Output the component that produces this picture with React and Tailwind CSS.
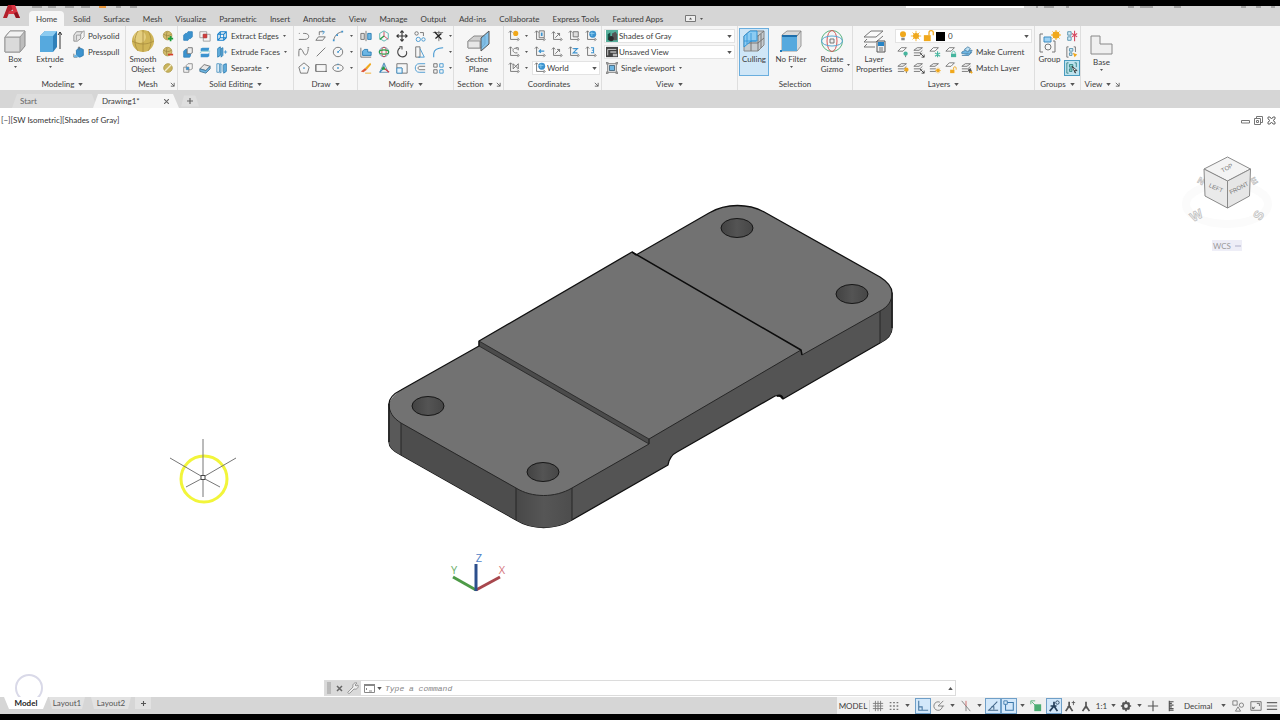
import { useState } from "react";

const MENU_TABS = [
    "Home", "Solid", "Surface", "Mesh", "Visualize", "Parametric", "Insert", "Annotate",
    "View", "Manage", "Output", "Add-ins", "Collaborate", "Express Tools", "Featured Apps",
];

const G = "#6a6a6a";
const B = "#3c93cf";
const LB = "#6cb6e4";
const O = "#f0a81c";

// Small ribbon icons, all on a 14 x 14 grid
const ICONS = {
    polysolid: (
        <>
            <path d="M1 6l3-4h7l-2 3v5l-4 3H1z" fill="#e4e4e4" stroke="#888" />
            <path d="M11 2l2-1v7l-3 3M4 6h5M4 6v6" fill="none" stroke="#999" />
        </>
    ),
    presspull: (
        <>
            <path d="M4 5l3-3 5 2v7l-4 2-4-2z" fill={B} stroke="#2a78b0" />
            <path d="M1 9v4h4M7 1v4M6 2l1-1 1 1" fill="none" stroke={G} />
            <path d="M1 11l3-1 3 3H1z" fill={LB} />
        </>
    ),
    meshAdd: (
        <>
            <circle cx="6.500" cy="6.500" r="5" fill="#d2bb6c" stroke="#b09a4c" />
            <path d="M2 5c3 2 6 2 9 0M6 2c-1 3-1 6 0 9" fill="none" stroke="#a08a44" />
            <path d="M10 7v6M7 10h6" stroke="#1c9c3b" strokeWidth="2" />
        </>
    ),
    meshLess: (
        <>
            <circle cx="6.500" cy="6.500" r="5" fill="#d2bb6c" stroke="#b09a4c" />
            <path d="M2 5c3 2 6 2 9 0M6 2c-1 3-1 6 0 9" fill="none" stroke="#a08a44" />
            <path d="M7 10h6" stroke="#d5402b" strokeWidth="2" />
        </>
    ),
    meshRefine: (
        <>
            <circle cx="7" cy="7" r="5" fill="#c9b45c" stroke="#b09a4c" />
            <path d="M3 11l8-8" stroke="#f3ecd0" strokeWidth="1.500" />
        </>
    ),
    union: <path d="M2 6l2-2h2l1-2h5v6l-2 2H8l-1 2H2z" fill={B} stroke="#3584bd" />,
    subtract: (
        <>
            <path d="M2 6l2-2h3v5h3v2l-1 2H2z" fill={B} stroke="#3584bd" />
            <path d="M6 3l1-1h5v6l-2 1H6z" fill="#eee" stroke={G} />
        </>
    ),
    intersect: (
        <>
            <path d="M2 6h6v6H2zM5 4l2-2h5v6l-2 1H5z" fill="#f4f4f4" stroke="#888" />
            <path d="M5 6h3v3H5z" fill={B} />
        </>
    ),
    interfere: (
        <>
            <path d="M1 2h8v7H1zM5 5h8v8H5z" fill="#f4f4f4" stroke="#999" />
            <path d="M5 5h4v4H5z" fill="#d63b3b" stroke="#b33" />
        </>
    ),
    slice: (
        <>
            <path d="M2 3l2-1h8l-1 4H2zM2 9h9l1-2v5l-2 1H2z" fill={B} />
            <path d="M1 8l3-2h9" stroke="#8cc" fill="none" />
        </>
    ),
    thicken: (
        <>
            <path d="M1 8l5-5 7 2-5 5z" fill="#e6e6e6" stroke={G} />
            <path d="M1 8v3l7 2 5-5V5l-5 5z" fill={LB} stroke="#4a7695" />
        </>
    ),
    extractEdges: (
        <path d="M2 5l3-3h7v7l-3 3H2zM2 5h7v7M9 5l3-3M5 2v7h7M5 9l-3 3" fill="none" stroke="#157fcb" strokeWidth="1.200" />
    ),
    extrudeFaces: (
        <>
            <path d="M2 3l3-2v10l-3 2zM6 3l2-1v9l-2 2z" fill={LB} stroke="#2479b0" />
            <path d="M9 7h4M11 5v4" stroke={B} />
        </>
    ),
    separate: (
        <>
            <path d="M1 2h3v10H1zM5 2l2 1v8l-2 2z" fill="#e8f4fb" stroke="#4c93c0" />
            <path d="M9 3l3-1v9l-3 2z" fill={LB} stroke="#2479b0" />
        </>
    ),
    polyline: <path d="M1 4h1M1 11h7c6 0 6-7 0-7H6" fill="none" stroke={G} />,
    sweep: (
        <>
            <path d="M4 8h8l-3 4H1zM5 6V2h5" fill="none" stroke={G} />
            <path d="M8 1l3 1-2 3" fill="none" stroke={B} />
        </>
    ),
    arc: (
        <>
            <path d="M2 12C3 6 7 3 12 2" fill="none" stroke={G} />
            <path d="M1 11h2v2H1zM11 1h2v2h-2zM5 5h2v2H5z" fill={B} />
        </>
    ),
    spline: <path d="M1 12V7c0-5 3-5 5 0s5 5 6-4M1 4h2M11 2h2" fill="none" stroke={G} />,
    line: <path d="M2 12L12 2" stroke={G} />,
    circle: (
        <>
            <circle cx="7" cy="7" r="5.500" fill="none" stroke={G} />
            <path d="M7 7l4-4" stroke={B} />
            <path d="M6 6h2v2H6z" fill={B} />
        </>
    ),
    polygon: (
        <>
            <path d="M7 1l6 5-2 7H3L1 6z" fill="none" stroke={G} />
            <circle cx="7" cy="7" r="1" fill={B} />
        </>
    ),
    rect: <path d="M1 3h12v8H1zM1 3v8M12 11h2" fill="none" stroke={G} />,
    ellipse: (
        <>
            <ellipse cx="7" cy="7" rx="6" ry="4" fill="none" stroke={G} />
            <path d="M6 6h2v2H6zM6 2h2v1H6z" fill={B} />
        </>
    ),
    mirror: (
        <>
            <path d="M1 4h4v7H1z" fill="#ddd" stroke={G} />
            <path d="M9 4h4v7H9z" fill={LB} stroke="#2479b0" />
            <path d="M7 1v12" stroke={G} />
        </>
    ),
    align: (
        <>
            <path d="M1 2v11h12" fill="none" stroke={G} />
            <path d="M3 6l2-2h4v3h4v4H3z" fill={LB} stroke="#2479b0" />
        </>
    ),
    erase: (
        <>
            <path d="M12 1L6 7l2 2 5-6z" fill={O} />
            <path d="M6 7l2 2-4 3-3-1z" fill="#df5a3a" />
            <path d="M6 13h7" stroke={O} />
        </>
    ),
    move3d: (
        <>
            <path d="M7 1l5 3v6l-5 3-5-3V4z" fill="none" stroke="#4aaea8" />
            <path d="M7 7V2M7 7l5 4" stroke="#c8374b" />
            <path d="M7 7l-5 4" stroke="#279c46" strokeWidth="1.500" />
        </>
    ),
    rotate3d: (
        <>
            <circle cx="7" cy="7" r="5.500" fill="none" stroke="#5a8aa8" />
            <ellipse cx="7" cy="7" rx="2.500" ry="5.500" fill="none" stroke="#cf3b45" />
            <ellipse cx="7" cy="7" rx="5.500" ry="2.500" fill="none" stroke="#29a04a" strokeWidth="1.300" />
        </>
    ),
    scale3d: (
        <>
            <path d="M7 1L2 12h10z" fill="none" stroke="#5a8aa8" />
            <path d="M7 2v5l-5 5" fill="none" stroke="#2b86c5" strokeWidth="1.200" />
            <path d="M5 6l2-1 2 4H4z" fill="#279c46" />
            <path d="M8 8l5 4" stroke="#cf3b45" strokeWidth="1.500" />
        </>
    ),
    move: <path d="M7 1v12M1 7h12M5 3l2-2 2 2M5 11l2 2 2-2M3 5L1 7l2 2M11 5l2 2-2 2" fill="none" stroke="#333" strokeWidth="1.300" />,
    rotate: <path d="M5 2C1 4 1 10 5 12s9-1 7-6M4 1h3v3" fill="none" stroke="#444" strokeWidth="1.200" />,
    scale: (
        <>
            <path d="M1 2h12v11H1zM1 7h6v6" fill="none" stroke={G} />
            <path d="M1 7h6v6H1z" fill="#e7f3fa" stroke={B} />
        </>
    ),
    copy: (
        <>
            <circle cx="3" cy="4" r="2" fill="none" stroke={G} />
            <path d="M7 3h4v4" fill="none" stroke={G} />
            <circle cx="5" cy="11" r="2.500" fill="none" stroke={B} />
            <circle cx="11" cy="11" r="2" fill="none" stroke={B} />
        </>
    ),
    stretch: (
        <>
            <path d="M2 1h5v12H2z" fill="none" stroke={G} />
            <path d="M7 3l5 10H5" fill="none" stroke={B} />
        </>
    ),
    offset: (
        <>
            <path d="M13 2H6c-6 0-6 10 0 10h7" fill="none" stroke={B} />
            <path d="M13 5H7c-3 0-3 4 0 4h6" fill="none" stroke={G} />
        </>
    ),
    trim: (
        <>
            <path d="M1 3h12M8 1v12" stroke={G} />
            <path d="M3 2l8 9M11 4l-7 6" stroke="#222" strokeWidth="1.500" />
        </>
    ),
    fillet: <path d="M2 13V9C2 5 6 2 13 2" fill="none" stroke={B} strokeWidth="1.200" />,
    array: (
        <>
            <path d="M2 2h4v4H2zM2 9h4v4H2z" fill="none" stroke={G} />
            <path d="M9 2h4v4H9zM9 9h4v4H9z" fill="none" stroke={B} />
        </>
    ),
    ucsOrigin: (
        <>
            <path d="M3 1v10h9M1 3l2-2 2 2M11 9l2 2-2 2" fill="none" stroke={G} />
            <circle cx="9" cy="4" r="3" fill={O} />
        </>
    ),
    ucsCircle: (
        <>
            <path d="M3 1v10h9M1 3l2-2 2 2M11 9l2 2-2 2" fill="none" stroke={G} />
            <path d="M11 4c-3-3-6 0-5 2s4 3 5 1M9 2h3v3" fill="none" stroke={G} />
        </>
    ),
    ucsBox: (
        <>
            <path d="M3 1v10h9M1 3l2-2 2 2M11 9l2 2-2 2" fill="none" stroke={G} />
            <path d="M6 1h6v8H6z" fill="#eee" stroke={G} />
            <path d="M8 3h2v4H8z" fill={B} />
        </>
    ),
    ucsArrow: (
        <>
            <path d="M3 1v10h9M1 3l2-2 2 2M11 9l2 2-2 2" fill="none" stroke={G} />
            <path d="M12 6H7M8 4L6 6l2 2" fill="none" stroke={B} strokeWidth="1.500" />
        </>
    ),
    ucsDiag: <path d="M3 2v9h9M1 4l2-2 2 2M11 9l2 2-2 2M5 9l5-5M7 4h3v3" fill="none" stroke={G} />,
    ucsGlobe: (
        <>
            <path d="M3 1v10h9M1 3l2-2 2 2M11 9l2 2-2 2" fill="none" stroke={G} />
            <circle cx="9" cy="5" r="4" fill={B} />
            <path d="M6 4h5M8 2v5" stroke="#8fd0f0" />
        </>
    ),
    ucsView: (
        <>
            <path d="M3 1v10h9M1 3l2-2 2 2M11 9l2 2-2 2" fill="none" stroke={G} />
            <path d="M6 2h6v6H6z" fill="#ddd" stroke={G} />
        </>
    ),
    ucsZ: (
        <>
            <path d="M3 1v10h9M1 3l2-2 2 2M11 9l2 2-2 2" fill="none" stroke={G} />
            <path d="M6 3h5L6 8h5" fill="none" stroke={B} strokeWidth="1.300" />
        </>
    ),
    ucsThree: (
        <>
            <path d="M3 1v10h9M1 3l2-2 2 2M11 9l2 2-2 2" fill="none" stroke={G} />
            <path d="M7 2h3v3H8h2v3H7" fill="none" stroke={B} strokeWidth="1.200" />
        </>
    ),
    ucsCross: (
        <>
            <path d="M3 1v10h9M1 3l2-2 2 2M11 9l2 2-2 2" fill="none" stroke={G} />
            <path d="M6 2l6 6M12 2L6 8M6 2v6M12 2v6" stroke={G} />
        </>
    ),
    shade: (
        <>
            <path d="M0 0h14v14H0z" fill="#56b09c" />
            <path d="M2 5l3-2v9H2z" fill="#164f44" />
            <path d="M7 4l4-2 2 3v7H7z" fill="#555" />
            <circle cx="6" cy="10" r="3" fill="#2b2b2b" />
        </>
    ),
    camera: (
        <>
            <path d="M0 1h14v12H0z" fill="#444" />
            <path d="M2 4h10M2 4v7" stroke="#ddd" />
            <path d="M5 6h7v2H5zM8 9h5v3H8z" fill="#bbb" />
        </>
    ),
    viewport: (
        <>
            <path d="M2 2h10v10H2zM0 1h3M11 1h3M0 13h3M11 13h3M1 0v3M13 0v3M1 11v3M13 11v3" fill="none" stroke={G} />
            <path d="M4 4h6v6H4z" fill={LB} stroke="#3a5a70" />
        </>
    ),
    bulb: (
        <>
            <circle cx="7" cy="5" r="3.500" fill={O} />
            <path d="M5 9h4v3H5z" fill="#8a8a8a" />
        </>
    ),
    sun: (
        <>
            <circle cx="7" cy="7" r="3.500" fill={O} />
            <path d="M7 1v12M1 7h12M3 3l8 8M11 3l-8 8" stroke={O} />
        </>
    ),
    lockOpen: (
        <>
            <path d="M1 6h8v7H1z" fill={O} />
            <path d="M7 6V3c0-3 5-3 5 0v3" fill="none" stroke={O} strokeWidth="1.500" />
        </>
    ),
    layerOff: (
        <>
            <path d="M1 6l4-4h6L7 6z" fill="#fff" stroke={G} />
            <circle cx="10" cy="9" r="2.500" fill="#45b59e" />
            <path d="M10 11v2" stroke={G} />
        </>
    ),
    layerIso: (
        <>
            <path d="M1 5l4-3h6L7 5zM1 8h7l3-3M1 11h7l3-3" fill="none" stroke={G} />
            <path d="M8 8l5 5M10 13h3v-3" stroke="#333" fill="none" />
        </>
    ),
    layerFreeze: (
        <>
            <path d="M1 6l4-4h6L7 6z" fill="#fff" stroke={G} />
            <path d="M10 6v7M7 8l6 4M13 8l-6 4" stroke="#45b59e" strokeWidth="1.300" />
        </>
    ),
    layerLock: (
        <>
            <path d="M1 6l4-4h6L7 6z" fill="#fff" stroke={G} />
            <path d="M7 9h6v4H7z" fill="#45b59e" />
            <path d="M8 9c0-4 4-4 4 0" fill="none" stroke="#45b59e" />
        </>
    ),
    layerCurrent: (
        <>
            <path d="M1 7l4-2h8l-3 4H1zM1 11h8l4-4" fill={LB} stroke="#4c83a8" />
            <path d="M4 4l4-3 3 2-3 4z" fill="#bcdff2" stroke="#4c83a8" />
        </>
    ),
    layerOn: (
        <>
            <path d="M1 5l4-3h6L7 5zM1 8h7l3-3M1 11h7l3-3" fill="none" stroke={G} />
            <circle cx="11" cy="9" r="2.500" fill={O} />
            <path d="M11 11v2" stroke={G} />
        </>
    ),
    layerThaw: (
        <>
            <path d="M1 5l4-3h6L7 5zM1 8h7M1 11h7" fill="none" stroke={G} />
            <circle cx="10.500" cy="10" r="2" fill={O} />
            <path d="M10.500 6.500v7M7 10h7M8 7.500l5 5M13 7.500l-5 5" stroke={O} strokeWidth=".7" />
        </>
    ),
    layerUnlock: (
        <>
            <path d="M1 5l4-4h6L7 5z" fill="#fff" stroke={G} />
            <path d="M6 9h5v4H6z" fill={O} />
            <path d="M10 9V7c0-2 3-2 3 0v2" fill="none" stroke={O} />
        </>
    ),
    layerMatch: (
        <>
            <path d="M1 5l4-3h6L7 5zM1 8h7l3-3M1 11h7l3-3" fill="none" stroke={G} />
            <path d="M8 9l3-2 2 4-3 2z" fill="#555" />
            <path d="M11 11l2 2" stroke={O} strokeWidth="2" />
        </>
    ),
    ungroup: (
        <>
            <path d="M2 2h4v4H2zM2 8h4v4H2z" fill="#d7edf7" stroke="#4b8ba8" />
            <path d="M10 1v12M7 4l6 4M13 4l-6 4" stroke="#d64b62" strokeWidth="1.300" />
        </>
    ),
    groupEdit: (
        <>
            <path d="M3 1H1v12h2M9 1h2v6" fill="none" stroke={G} />
            <path d="M4 3h4v3H4zM4 8h3v3H4z" fill="#d7edf7" stroke="#4b8ba8" />
            <path d="M8 8l5 2-3 3z" fill={O} />
        </>
    ),
    groupSelect: (
        <>
            <path d="M3 1H1v12h2M10 1h2v5" fill="none" stroke="#2c7f80" />
            <path d="M4 3h4v3H4zM4 8h3v3H4z" fill="#8ed0c8" stroke="#2c7f80" />
            <path d="M7 5l6 5-3 0 1 3z" fill="#fff" stroke="#333" />
        </>
    ),
};

function Icon({ name }) {
    return (
        <svg viewBox="0 0 14 14" className="size-3 shrink-0" aria-hidden="true">
            {ICONS[name]}
        </svg>
    );
}

function Caret({ small }) {
    return (
        <svg viewBox="0 0 6 4" className={small ? "h-0.5 w-[3px] shrink-0" : "h-[3px] w-[5px] shrink-0"} aria-hidden="true">
            <path d="M0 0h6L3 4z" fill="#555" />
        </svg>
    );
}

function Tool({ icon, active }) {
    return (
        <button
            type="button"
            aria-label={icon}
            className={`flex h-4 w-4 shrink-0 items-center justify-center ${active ? "border border-[#4a9cc0] bg-[#bfe3ee]" : ""}`}
        >
            <Icon name={icon} />
        </button>
    );
}

function Drop() {
    return (
        <button type="button" aria-label="More options" className="flex h-4 w-2 shrink-0 items-center justify-center">
            <Caret small />
        </button>
    );
}

function TextTool({ icon, children, drop }) {
    return (
        <button type="button" className="flex h-4 items-center whitespace-nowrap">
            <span className="flex w-4 justify-center">
                <Icon name={icon} />
            </span>
            <span className="pl-px">{children}</span>
            {drop && (
                <span className="pl-1">
                    <Caret small />
                </span>
            )}
        </button>
    );
}

function BigTool({ art, lines, drop, active, className = "" }) {
    return (
        <button
            type="button"
            className={`flex h-12 shrink-0 flex-col items-center leading-[10px] ${active ? "border border-[#6aaede] bg-[#cfe6f7]" : "border border-transparent"} ${className}`}
        >
            <svg viewBox="0 0 24 24" className="mb-px size-6 shrink-0" aria-hidden="true">
                {art}
            </svg>
            {lines.map((line) => (
                <span key={line} className="whitespace-nowrap">{line}</span>
            ))}
            {drop && (
                <span className="flex h-1.5 items-center">
                    <Caret small />
                </span>
            )}
        </button>
    );
}

function Panel({ title, drop, launcher, className, children }) {
    return (
        <section className={`flex shrink-0 flex-col border-r border-[#dedede] pt-0.5 ${className}`}>
            <div className="flex h-12">{children}</div>
            <div className="flex h-[14px] items-center justify-center pt-0.5">
                <span className="flex flex-1 items-center justify-center gap-1">
                    {title}
                    {drop && <Caret />}
                </span>
                {launcher && (
                    <button type="button" aria-label={`${title} settings`} className="pr-0.5">
                        <svg viewBox="0 0 6 6" className="size-[5px]">
                            <path d="M1 1l4 4M5 1v4H1" fill="none" stroke="#555" />
                        </svg>
                    </button>
                )}
            </div>
        </section>
    );
}

function Combo({ icon, label, value, className = "" }) {
    return (
        <label className={`relative flex h-[14px] items-center border border-[#e3e3e3] bg-white ${className}`}>
            <span className="pl-px">
                <Icon name={icon} />
            </span>
            <select aria-label={label} className="h-full min-w-0 flex-1 appearance-none bg-transparent pl-px outline-none">
                <option>{value}</option>
            </select>
            <span className="pointer-events-none pr-0.5">
                <Caret />
            </span>
        </label>
    );
}

const BIG_ART = {
    box: (
        <>
            <path d="M2 8l5-6h15v15l-5 6H2z" fill="#bdbdbd" stroke="#888" />
            <path d="M2 8h15v15H2z" fill="#dadada" stroke="#999" />
            <path d="M17 8l5-6H7L2 8z" fill="#f1f1f1" stroke="#999" />
        </>
    ),
    extrude: (
        <>
            <path d="M2 7l5-5h12v16l-4 5H2z" fill="#2f80b9" />
            <path d="M2 7h13v16H2z" fill="#56a9de" />
            <path d="M2 7l5-5h12l-4 5z" fill="#8ccbf0" />
            <path d="M22 20V3M20 6l2-3 2 3" fill="none" stroke="#333" />
        </>
    ),
    sphere: (
        <>
            <circle cx="12" cy="12" r="11" fill="#d0b557" />
            <circle cx="9" cy="8" r="6" fill="#ecd98f" opacity=".7" />
            <path d="M1 12c7 4 15 4 22 0M12 1v22M7 2c-4 6-4 14 0 20M17 2c4 6 4 14 0 20" fill="none" stroke="#a88e40" strokeWidth=".8" />
        </>
    ),
    section: (
        <>
            <path d="M1 12l6-5h11v8l-4 4H1z" fill="#cfcfcf" stroke="#888" />
            <path d="M1 12h12v7H1z" fill="#e7e7e7" stroke="#999" />
            <path d="M14 9l8-7v13l-8 7z" fill="#69b6e8" fillOpacity=".8" stroke="#555" />
        </>
    ),
    culling: (
        <>
            <path d="M2 7l6-5h14v14l-6 6H2z" fill="#c6ccd0" stroke="#888" />
            <path d="M2 7h14v15M16 7l6-5M2 14h14l6-5M9 7v15M9 7l6-5M19 5v14" fill="none" stroke="#777" />
            <path d="M2 7l6-5h7v10H9l-7 6z" fill="#8ccbf2" stroke="#2f93d6" />
            <path d="M2 12h12M5 5v10M9 4v9" stroke="#2f93d6" strokeWidth=".8" />
        </>
    ),
    filter: (
        <>
            <path d="M3 6l5-4h14v15l-4 5H3z" fill="#dadada" stroke="#999" />
            <path d="M3 8h15v14H3z" fill="#56a9de" />
            <path d="M3 6h15v2H3z" fill="#1f6fab" />
            <path d="M18 7l4-5" stroke="#888" />
            <path d="M1 21h2v2H1z" fill="#2277b5" />
        </>
    ),
    gizmo: (
        <>
            <circle cx="12" cy="12" r="10.500" fill="none" stroke="#5cb582" />
            <ellipse cx="12" cy="12" rx="5" ry="10.500" fill="none" stroke="#d45858" />
            <ellipse cx="12" cy="12" rx="10.500" ry="5" fill="none" stroke="#5aa7d2" />
            <path d="M10 10h4v4h-4z" fill="#eee" stroke="#777" />
        </>
    ),
    layers: (
        <>
            <path d="M2 8l7-6h12l-7 6zM2 13h12l7-6M2 13l3-3M2 18h11M2 18l3-3" fill="#fafafa" stroke="#777" />
            <path d="M15 12h8v11h-8z" fill="#eee" stroke="#555" />
            <path d="M16 13h6v4h-6z" fill="#2684c6" />
            <path d="M17 19h4M17 21h4" stroke="#777" />
        </>
    ),
    group: (
        <>
            <path d="M5 5H2v18h3M15 12h2v11h-3" fill="none" stroke="#777" />
            <path d="M6 8h7v5H6z" fill="#9ed2f4" stroke="#3c8bc0" />
            <circle cx="10" cy="18" r="3" fill="none" stroke="#777" />
            <circle cx="18" cy="6" r="3.500" fill={O} />
            <path d="M18 1v10M13 6h10M14.500 2.500l7 7M21.500 2.500l-7 7" stroke={O} />
        </>
    ),
    base: <path d="M1 4h9v8h12v10H1z" fill="#efefef" stroke="#888" />,
};

function Ribbon() {
    return (
        <div className="flex h-16 shrink-0 overflow-hidden bg-[#f6f6f6]">
            <Panel title="Modeling" drop className="w-[126px]">
                <BigTool art={BIG_ART.box} lines={["Box"]} drop className="w-[30px]" />
                <BigTool art={BIG_ART.extrude} lines={["Extrude"]} drop className="w-10" />
                <div className="pl-px">
                    <TextTool icon="polysolid">Polysolid</TextTool>
                    <TextTool icon="presspull">Presspull</TextTool>
                </div>
            </Panel>
            <Panel title="Mesh" launcher className="w-[52px]">
                <BigTool art={BIG_ART.sphere} lines={["Smooth", "Object"]} className="w-[34px]" />
                <div>
                    <Tool icon="meshAdd" />
                    <Tool icon="meshLess" />
                    <Tool icon="meshRefine" />
                </div>
            </Panel>
            <Panel title="Solid Editing" drop className="w-[116px]">
                <div className="grid w-9 shrink-0 grid-cols-2 pl-0.5">
                    <Tool icon="union" />
                    <Tool icon="interfere" />
                    <Tool icon="subtract" />
                    <Tool icon="slice" />
                    <Tool icon="intersect" />
                    <Tool icon="thicken" />
                </div>
                <div>
                    <TextTool icon="extractEdges" drop>Extract Edges</TextTool>
                    <TextTool icon="extrudeFaces" drop>Extrude Faces</TextTool>
                    <TextTool icon="separate" drop>Separate</TextTool>
                </div>
            </Panel>
            <Panel title="Draw" drop className="w-16">
                <div className="pl-0.5">
                    {[["polyline", "sweep", "arc"], ["spline", "line", "circle"], ["polygon", "rect", "ellipse"]].map(([a, b, c]) => (
                        <div key={a} className="flex gap-px">
                            <Tool icon={a} />
                            <Tool icon={b} />
                            <Tool icon={c} />
                            <Drop />
                        </div>
                    ))}
                </div>
            </Panel>
            <Panel title="Modify" drop className="w-24">
                <div>
                    {[
                        ["mirror", "move3d", "move", "copy", "trim"],
                        ["align", "rotate3d", "rotate", "stretch", "fillet"],
                        ["erase", "scale3d", "scale", "offset", "array"],
                    ].map((row) => (
                        <div key={row[0]} className="flex">
                            <div className="flex gap-0.5">
                                {row.map((name) => (
                                    <Tool key={name} icon={name} />
                                ))}
                            </div>
                            <Drop />
                        </div>
                    ))}
                </div>
            </Panel>
            <Panel title="Section" drop launcher className="w-[50px]">
                <BigTool art={BIG_ART.section} lines={["Section", "Plane"]} className="w-full" />
            </Panel>
            <Panel title="Coordinates" launcher className="w-[98px]">
                <div className="pl-0.5">
                    <div className="flex">
                        <Tool icon="ucsOrigin" />
                        <Drop />
                        <div className="flex gap-px pl-0.5">
                            <Tool icon="ucsBox" />
                            <Tool icon="ucsDiag" />
                            <Tool icon="ucsView" />
                            <Tool icon="ucsGlobe" />
                        </div>
                    </div>
                    <div className="flex">
                        <Tool icon="ucsCircle" />
                        <Drop />
                        <div className="flex gap-px pl-0.5">
                            <Tool icon="ucsArrow" />
                            <Tool icon="ucsDiag" />
                            <Tool icon="ucsZ" />
                            <Tool icon="ucsThree" />
                        </div>
                    </div>
                    <div className="flex items-center">
                        <Tool icon="ucsCross" />
                        <Drop />
                        <Combo icon="ucsGlobe" label="Coordinate system" value="World" className="ml-0.5 w-[68px]" />
                    </div>
                </div>
            </Panel>
            <Panel title="View" drop className="w-[136px]">
                <div className="flex-1 px-0.5">
                    <div className="flex h-4 items-center">
                        <Combo icon="shade" label="Visual style" value="Shades of Gray" className="w-full" />
                    </div>
                    <div className="flex h-4 items-center">
                        <Combo icon="camera" label="Saved view" value="Unsaved View" className="w-full" />
                    </div>
                    <TextTool icon="viewport" drop>Single viewport</TextTool>
                </div>
            </Panel>
            <Panel title="Selection" className="w-[115px]">
                <BigTool art={BIG_ART.culling} lines={["Culling"]} active className="ml-px w-[30px]" />
                <BigTool art={BIG_ART.filter} lines={["No Filter"]} drop className="w-11" />
                <div className="flex items-end">
                    <BigTool art={BIG_ART.gizmo} lines={["Rotate", "Gizmo"]} className="w-[38px]" />
                    <span className="-ml-1 pb-2.5">
                        <Caret small />
                    </span>
                </div>
            </Panel>
            <Panel title="Layers" drop className="w-[182px]">
                <BigTool art={BIG_ART.layers} lines={["Layer", "Properties"]} className="w-[42px]" />
                <div className="flex-1 pr-0.5">
                    <div className="flex h-4 items-center">
                        <div className="flex h-[14px] w-full items-center gap-px border border-[#e3e3e3] bg-white pr-0.5 pl-px">
                            <Icon name="bulb" />
                            <Icon name="sun" />
                            <Icon name="lockOpen" />
                            <span className="size-[9px] bg-black" />
                            <select aria-label="Layer" className="h-full min-w-0 flex-1 appearance-none bg-transparent pl-0.5 outline-none">
                                <option>0</option>
                            </select>
                            <Caret />
                        </div>
                    </div>
                    <div className="flex">
                        <Tool icon="layerOff" />
                        <Tool icon="layerIso" />
                        <Tool icon="layerFreeze" />
                        <Tool icon="layerLock" />
                        <TextTool icon="layerCurrent">Make Current</TextTool>
                    </div>
                    <div className="flex">
                        <Tool icon="layerOn" />
                        <Tool icon="layerIso" />
                        <Tool icon="layerThaw" />
                        <Tool icon="layerUnlock" />
                        <TextTool icon="layerMatch">Match Layer</TextTool>
                    </div>
                </div>
            </Panel>
            <Panel title="Groups" drop className="w-[46px]">
                <BigTool art={BIG_ART.group} lines={["Group"]} className="w-[29px]" />
                <div>
                    <Tool icon="ungroup" />
                    <Tool icon="groupEdit" />
                    <Tool icon="groupSelect" active />
                </div>
            </Panel>
            <Panel title="View" drop launcher className="w-[42px] border-r-transparent">
                <BigTool art={BIG_ART.base} lines={["Base"]} drop className="w-full pt-[3px]" />
            </Panel>
        </div>
    );
}

function Header({ tab, setTab }) {
    return (
        <header className="relative flex h-5 shrink-0 flex-col justify-end bg-[#d6d6d6]">
            {/* Lower edge of the title bar */}
            <div className="absolute inset-x-0 top-0 flex h-0.5 justify-between pr-1 pl-8">
                <svg viewBox="0 0 110 2" className="h-0.5 w-[110px]" aria-hidden="true">
                    <path d="M0 1h10M16 1h8M33 1h9M49 1h9M84 1h5M98 1h7" stroke="#777" />
                    <path d="M67 1h7" stroke="#e8953a" strokeWidth="2" />
                </svg>
                <div className="ml-auto h-0.5 w-[118px] bg-white" />
                <svg viewBox="0 0 252 2" className="h-0.5 w-[252px]" aria-hidden="true">
                    <path d="M12 1h2M20 1h10M42 1h3M104 1h6M116 1h13M150 1h7M217 1h5M232 1h5M247 1h4" stroke="#777" />
                </svg>
            </div>
            <svg viewBox="0 0 18 14" className="absolute -top-px left-[3px] h-[14px] w-[18px]" aria-hidden="true">
                <path d="M5 0h5l1 3-5 5-2 5H0z" fill="#b3202c" />
                <path d="M8 0h4l5 13h-4l-2-4H5l1-3h4z" fill="#d93240" />
                <path d="M13 13l-2-5 3-1 3 6z" fill="#8e1520" />
            </svg>
            <nav className="flex h-[15px] items-stretch pl-[29px]">
                {MENU_TABS.map((name) => (
                    <a
                        key={name}
                        href="#ribbon"
                        onClick={() => setTab(name)}
                        className={`flex items-center pl-[7px] whitespace-nowrap first:mr-0.5 first:pr-[7px] ${tab === name ? "rounded-t-sm bg-[#f6f6f6] pr-1.5" : "pr-1.5"}`}
                    >
                        {name}
                    </a>
                ))}
                <button type="button" aria-label="Ribbon display" className="flex items-center gap-1 pl-4">
                    <svg viewBox="0 0 11 7" className="h-[7px] w-[11px]">
                        <path d="M.5.500h10v6H.5z" fill="#eee" stroke="#777" />
                        <path d="M4 4.500h3L5.500 2.500z" fill="#555" />
                    </svg>
                    <Caret small />
                </button>
            </nav>
        </header>
    );
}

function FileTabs() {
    return (
        <div className="flex h-[18px] shrink-0 items-end bg-[#d6d6d6] pl-3">
            <a href="#start" className="flex h-[14px] w-[85px] items-center bg-[#dedede] pl-2 text-[#666] [clip-path:polygon(5px_0,calc(100%-5px)_0,100%_100%,0_100%)]">
                Start
            </a>
            <div className="-ml-1 flex h-[14px] w-[86px] items-center justify-between bg-[#f6f6f6] pr-2.5 pl-[9px] [clip-path:polygon(5px_0,calc(100%-6px)_0,100%_100%,0_100%)]">
                <a href="#drawing1">Drawing1*</a>
                <button type="button" aria-label="Close Drawing1">
                    <svg viewBox="0 0 6 6" className="size-[5px]">
                        <path d="M0 0l6 6M6 0L0 6" stroke="#666" strokeWidth="1.300" />
                    </svg>
                </button>
            </div>
            <button type="button" aria-label="New drawing" className="ml-0.5 flex h-[14px] w-[18px] items-center justify-center bg-[#dedede] [clip-path:polygon(3px_10%,80%_10%,100%_90%,0_90%)]">
                <svg viewBox="0 0 6 6" className="size-1.5">
                    <path d="M3 0v6M0 3h6" stroke="#666" strokeWidth="1.200" />
                </svg>
            </button>
        </div>
    );
}

// Mounting plate in SW isometric view, with the UCS icon and the crosshair
function ModelView() {
    return (
        <svg viewBox="0 108 1280 589" className="h-full w-full" aria-hidden="true">
            <defs>
                <linearGradient id="corner" x1="0" x2="1" y1="0" y2="0">
                    <stop offset="0" stopColor="#484848" />
                    <stop offset=".5" stopColor="#565656" />
                    <stop offset="1" stopColor="#4d4d4d" />
                </linearGradient>
                <linearGradient id="hole" x1="0" x2="1" y1="0" y2="0">
                    <stop offset="0" stopColor="#424242" />
                    <stop offset=".5" stopColor="#545454" />
                    <stop offset="1" stopColor="#464646" />
                </linearGradient>
            </defs>
            <g strokeLinejoin="round">
                {/* body silhouette */}
                <path
                    d="M389 404V442C389 447 393 451 401 455L516 520C532 530 555 530 572 520L668 465C669 459 671 455 677 452L775 396C778 395 781 396 783 399L880 343C888 339 892 334 892 328V293L880 298 800 344 649 434 543 484 410 414z"
                    fill="#545454"
                    stroke="#111"
                    strokeWidth="1.300"
                />
                <path d="M401 423l115 65v32l-115-65z" fill="#4d4d4d" />
                <path d="M389 404v38c0 5 4 9 12 13v-32c-8-5-12-11-12-19z" fill="#595959" />
                <path d="M516 488c16 10 39 10 56 0v32c-17 10-40 10-56 0z" fill="url(#corner)" />
                <path d="M880 311c8-4 12-10 12-18v35c0 6-4 11-12 15z" fill="#4b4b4b" />
                {/* top faces */}
                <path
                    d="M401 390L479 346V341L632 252 636 255 709 213C726 203 749 203 766 213L880 277C896 287 896 301 880 311L802 355 801 350 649 439V444L572 488C555 498 532 498 516 488L401 423C385 413 385 400 401 390z"
                    fill="#727272"
                />
                <path d="M479 341l170 98v5l-170-98z" fill="#4b4b4b" stroke="#222" strokeWidth=".8" />
                <path d="M880 311L802 355M801 350L649 439V444L572 488C555 498 532 498 516 488L401 423C393 418 389 412 389 404" fill="none" stroke="#262626" />
                <path d="M389 442V404C389 399 393 394 401 390L479 346V341L632 252 636 255 709 213C726 203 749 203 766 213L880 277C888 282 892 287 892 293V328" fill="none" stroke="#111" strokeWidth="1.300" />
                <path d="M632 252L801 350 802 355" fill="none" stroke="#0c0c0c" strokeWidth="1.500" />
                <path d="M892 293C892 301 888 307 880 311V343M401 423V455M516 488V520M572 488V520" fill="none" stroke="#262626" />
                <path d="M777 396c3-1 5 0 6 3" fill="none" stroke="#0c0c0c" strokeWidth="2" />
                {[[737, 228], [852, 294], [428, 406], [543, 472]].map(([x, y]) => (
                    <ellipse key={x} cx={x} cy={y} rx="16" ry="9.500" fill="url(#hole)" stroke="#161616" />
                ))}
            </g>
            <g strokeWidth="3">
                <path d="M476 590l-23-13" stroke="#4e9a47" />
                <path d="M476 590l24-13" stroke="#a8474d" />
                <path d="M476 591v-27" stroke="#2c4f8c" />
            </g>
            <g className="font-['Open_Sans',sans-serif] text-[11px]" textAnchor="middle">
                <text x="454" y="574" fill="#69ad67">Y</text>
                <text x="479" y="562" fill="#4f7fc6">Z</text>
                <text x="502" y="574" fill="#d5767b">X</text>
            </g>
            <circle cx="204" cy="479" r="23" fill="none" stroke="#f2f53a" strokeWidth="3" />
            <path d="M203 439v36M203 480v17M170 458l31 18M205 479l15 8M236 458l-31 18M201 479l-15 8" stroke="#777" />
            <path d="M201 475.500h4v4h-4z" fill="#fff" stroke="#444" />
        </svg>
    );
}

function ViewCube() {
    return (
        <svg viewBox="1180 150 100 105" className="absolute top-[42px] right-0 h-[105px] w-[100px]" aria-hidden="true">
            <ellipse cx="1227" cy="204" rx="41" ry="20" fill="none" stroke="#fbfbfb" strokeWidth="8" />
            <g className="font-['Liberation_Sans',sans-serif] font-bold" fill="#f4f4f4" stroke="#bdbdbd" strokeWidth=".7" textAnchor="middle">
                <text x="1201" y="184" className="text-[9px]" transform="rotate(30 1201 181)">N</text>
                <text x="1254" y="184" className="text-[9px]" transform="rotate(-30 1254 181)">E</text>
                <text x="1196" y="220" className="text-[13px]" transform="rotate(-28 1196 215)">W</text>
                <text x="1258" y="220" className="text-[13px]" transform="rotate(-60 1258 215)">S</text>
            </g>
            <g strokeLinejoin="round" stroke="#8a8a8a">
                <path d="M1204 169l23.500-12 23 12-23 12z" fill="#f4f4f4" />
                <path d="M1204 169l23.500 12v27l-22.500-12z" fill="#eaeaea" />
                <path d="M1250.500 169l-23 12v27l22-12z" fill="#e6e6e6" />
            </g>
            <g className="font-['Liberation_Sans',sans-serif] text-[6px]" fill="#777" textAnchor="middle">
                <text x="1227" y="170" transform="rotate(-28 1227 168)">TOP</text>
                <text x="1216" y="190" transform="rotate(24 1216 188)">LEFT</text>
                <text x="1239" y="190" transform="rotate(-28 1239 188)">FRONT</text>
            </g>
        </svg>
    );
}

function Canvas() {
    return (
        <main className="relative z-10 min-h-0 flex-1 bg-white">
            <ModelView />
            <div className="absolute top-1.5 left-px text-[#333]">[−][SW Isometric][Shades of Gray]</div>
            <div className="absolute top-2 right-1 flex items-center gap-1">
                <button type="button" aria-label="Minimize viewport">
                    <svg viewBox="0 0 9 9" className="size-[9px]"><path d="M.5 4.500h8v2.500h-8z" fill="none" stroke="#777" /></svg>
                </button>
                <button type="button" aria-label="Restore viewport">
                    <svg viewBox="0 0 9 9" className="size-[9px]"><path d="M.5 2.500h6v6h-6zM2.500 2.500v-2h6v6h-2M2.500 4.500h2v2h-2z" fill="none" stroke="#777" /></svg>
                </button>
                <button type="button" aria-label="Close viewport">
                    <svg viewBox="0 0 9 9" className="size-[9px]"><path d="M1 1h2l1.500 2L6 1h2v2L6 4.500 8 6v2H6L4.500 6 3 8H1V6l2-1.500L1 3z" fill="none" stroke="#666" /></svg>
                </button>
            </div>
            <ViewCube />
            <button type="button" className="absolute top-[132px] right-[38px] flex h-[11px] w-[30px] items-center justify-center gap-1 bg-[#eeeef7] text-[#999]">
                WCS
                <span className="h-0.5 w-1.5 bg-[#cfcfe0]" />
            </button>
            <div className="absolute -bottom-[5px] left-[15px] size-7 rounded-full border-2 border-[#d9d9e8]" />

            {/* Command line */}
            <div className="absolute inset-x-[324px] bottom-px flex h-4 items-center border border-[#dcdcdc] bg-white">
                <div className="flex h-full w-9 shrink-0 items-center justify-between bg-[#dadada] px-0.5">
                    <svg viewBox="0 0 4 12" className="h-3 w-1" aria-hidden="true">
                        <path d="M0 1h4M0 3h4M0 5h4M0 7h4M0 9h4M0 11h4" stroke="#999" />
                    </svg>
                    <button type="button" aria-label="Close command line">
                        <svg viewBox="0 0 7 7" className="size-[7px]"><path d="M1 1l5 5M6 1L1 6" stroke="#666" strokeWidth="1.500" /></svg>
                    </button>
                    <button type="button" aria-label="Customize">
                        <svg viewBox="0 0 12 12" className="size-3"><path d="M1 10l5-5c-1-3 2-5 4-4L8 3l1 1 2-1c1 2-1 5-4 4l-4 4c-1 1-3 0-2-1z" fill="#eee" stroke="#999" /></svg>
                    </button>
                </div>
                <button type="button" aria-label="Recent commands" className="flex items-center gap-0.5 pl-[3px]">
                    <svg viewBox="0 0 11 9" className="h-[9px] w-[11px]">
                        <path d="M.5.500h10v8H.5z" fill="#fff" stroke="#888" />
                        <path d="M0 1h11" stroke="#888" strokeWidth="2" />
                        <path d="M2 4l1 1-1 1M5 7h3" fill="none" stroke="#888" />
                    </svg>
                    <Caret />
                </button>
                <input
                    type="text"
                    aria-label="Command"
                    placeholder="Type a command"
                    className="h-full min-w-0 flex-1 pl-[3px] font-['Liberation_Mono',monospace] italic outline-none placeholder:text-[#888]"
                />
                <button type="button" aria-label="Command history" className="rotate-180 px-0.5">
                    <Caret />
                </button>
            </div>
        </main>
    );
}

const STATUS_ART = {
    grid: <path d="M4 1v12M7 1v12M10 1v12M1 4h12M1 7h12M1 10h12" stroke="#777" />,
    snap: <path d="M2 3h2M6 3h2M10 3h2M2 7h2M6 7h2M10 7h2M2 11h2M6 11h2M10 11h2" stroke="#777" strokeWidth="1.500" />,
    ortho: <path d="M2 1v11h11M2 8h4v4" fill="none" stroke="#4c7ba5" strokeWidth="1.300" />,
    polar: <path d="M11 7a5 5 0 1 1-3-4.500M6 7l6-6M6 7h7" fill="none" stroke="#777" />,
    isodraft: (
        <>
            <path d="M2 1l10 12M7 7v6" stroke="#777" />
            <path d="M7 1v6" stroke="#ce6060" />
        </>
    ),
    track: <path d="M1 12h12M2 12L12 2M5 8h3v3" fill="none" stroke="#44688a" strokeWidth="1.200" />,
    osnap: (
        <>
            <path d="M3 3h9v9H3z" fill="none" stroke="#3c78ab" strokeWidth="1.200" />
            <path d="M1 1h4v4H1z" fill="#d6eafa" stroke="#3c78ab" />
        </>
    ),
    cycling: (
        <>
            <path d="M5 5h8v8H5z" fill="#4bad72" />
            <path d="M1 1h5M1 1v4M2 2l6 6" stroke="#4bad72" fill="none" />
        </>
    ),
    annoVis: (
        <>
            <path d="M7 2v6M7 7l-5 6M7 7l4 6M3 7h7" stroke="#27415c" strokeWidth="2" />
            <circle cx="11" cy="3" r="2" fill="none" stroke="#27415c" />
        </>
    ),
    annoAuto: (
        <>
            <path d="M6 2v6M6 7l-4 6M6 7l4 6M4 8h4" stroke="#555" strokeWidth="2" />
            <path d="M11 1v5M9 3h4" stroke="#555" />
        </>
    ),
    anno: <path d="M7 2v6M7 7l-4 6M7 7l4 6M5 9h4" stroke="#555" strokeWidth="2" />,
    gear: (
        <>
            <circle cx="7" cy="7" r="3.500" fill="none" stroke="#555" strokeWidth="2.500" />
            <path d="M7 1v2M7 11v2M1 7h2M11 7h2M3 3l1 1M10 10l1 1M11 3l-1 1M4 10l-1 1" stroke="#555" strokeWidth="2" />
        </>
    ),
    plus: <path d="M7 1v12M1 7h12" stroke="#555" strokeWidth="1.300" />,
    ruler: <path d="M5 1v12M5 2h5M5 4h3M5 6h5M5 8h3M5 10h5M5 12h5" fill="none" stroke="#555" strokeWidth="1.300" />,
    isolate: (
        <>
            <path d="M1 1h5v5H1zM4 13l3-5 3 5z" fill="none" stroke="#777" />
            <circle cx="11" cy="6" r="2.500" fill="none" stroke="#777" />
        </>
    ),
    clean: <path d="M1 2h12v10H1zM8 4h3v3M3 10l3-2M3 8v2h2" fill="none" stroke="#666" />,
    menu: <path d="M1 3h12M1 7h12M1 11h12" stroke="#666" strokeWidth="1.300" />,
};

function StatusButton({ name, active }) {
    return (
        <button
            type="button"
            aria-label={name}
            className={`flex h-4 w-4 shrink-0 items-center justify-center ${active ? "border border-[#6f9fc8] bg-[#d3e8fa]" : ""}`}
        >
            <svg viewBox="0 0 14 14" className="size-3 shrink-0">{STATUS_ART[name]}</svg>
        </button>
    );
}

function StatusDrop() {
    return (
        <button type="button" aria-label="More settings" className="flex h-4 w-[11px] shrink-0 items-center justify-center">
            <Caret />
        </button>
    );
}

function StatusBar() {
    return (
        <footer className="flex h-[17px] shrink-0 items-start justify-between bg-[#d6d6d6]">
            <nav className="relative z-20 flex h-3 pl-1 text-[#555]">
                <a href="#model" className="flex w-11 items-center justify-center bg-white font-bold text-[#222] [clip-path:polygon(0_0,100%_0,calc(100%-5px)_100%,5px_100%)]">
                    Model
                </a>
                <a href="#layout1" className="ml-px flex w-9 items-center justify-center bg-[#e2e2e2] [clip-path:polygon(0_0,100%_0,calc(100%-3px)_100%,3px_100%)]">Layout1</a>
                <a href="#layout2" className="ml-1.5 flex w-10 items-center justify-center bg-[#e2e2e2] [clip-path:polygon(0_0,100%_0,calc(100%-3px)_100%,3px_100%)]">Layout2</a>
                <button type="button" aria-label="New layout" className="ml-1 flex w-4 items-center justify-center bg-[#e2e2e2]">
                    <svg viewBox="0 0 6 6" className="size-[5px]"><path d="M3 0v6M0 3h6" stroke="#555" strokeWidth="1.300" /></svg>
                </button>
            </nav>
            <div className="flex h-full items-center bg-[#f0f0f0]">
                <button type="button" className="w-[33px] border-r border-[#d8d8d8]">MODEL</button>
                <StatusButton name="grid" />
                <StatusButton name="snap" />
                <StatusDrop />
                <span className="w-0.5" />
                <StatusButton name="ortho" active />
                <StatusButton name="polar" />
                <StatusDrop />
                <StatusButton name="isodraft" />
                <StatusDrop />
                <StatusButton name="track" active />
                <StatusButton name="osnap" active />
                <StatusDrop />
                <StatusButton name="cycling" />
                <span className="w-0.5" />
                <StatusButton name="annoVis" active />
                <StatusButton name="annoAuto" />
                <StatusButton name="anno" />
                <button type="button" className="flex w-6 items-center justify-center gap-1">
                    1:1
                    <Caret />
                </button>
                <StatusButton name="gear" />
                <StatusDrop />
                <StatusButton name="plus" />
                <span className="w-0.5" />
                <StatusButton name="ruler" />
                <button type="button" className="flex w-[51px] items-center justify-between pr-1 pl-[5px]">
                    Decimal
                    <Caret />
                </button>
                <StatusButton name="isolate" />
                <span className="w-0.5" />
                <StatusButton name="clean" />
                <StatusButton name="menu" />
            </div>
        </footer>
    );
}

function App() {
    const [tab, setTab] = useState("Home");

    return (
        <div className="flex h-screen flex-col overflow-hidden bg-black py-1.5 font-[Lato,'Open_Sans',sans-serif] text-[8px] leading-[12px] text-[#3c3c3c]">
            <Header tab={tab} setTab={setTab} />
            <Ribbon />
            <FileTabs />
            <Canvas />
            <StatusBar />
        </div>
    );
}

export default App;
